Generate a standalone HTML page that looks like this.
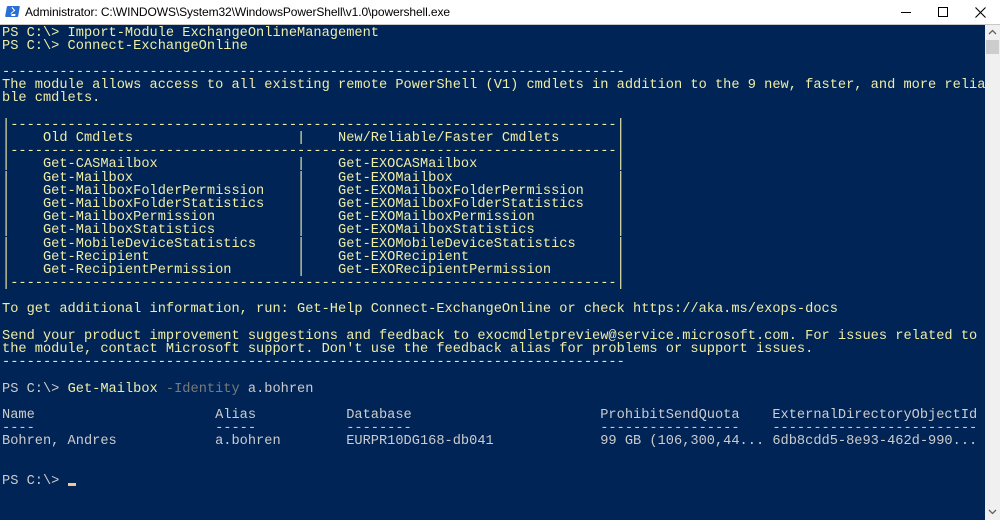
<!DOCTYPE html>
<html><head><meta charset="utf-8"><style>
*{margin:0;padding:0;box-sizing:border-box}
html,body{width:1000px;height:520px;overflow:hidden;background:#012456}
.tb{position:absolute;left:0;top:0;width:1000px;height:25px;background:#fff;border-bottom:1px solid #c8c8c8}
.ic{position:absolute;left:6px;top:6px;width:13px;height:11px;background:#2b6fd6;transform:skewX(-10deg);border-radius:1px}
.ic:before{content:"";position:absolute;left:3px;top:2px;width:4px;height:4px;border-right:1.5px solid #fff;border-bottom:1.5px solid #fff;transform:rotate(-45deg)}
.ic:after{content:"";position:absolute;left:6px;top:8px;width:4px;height:1.5px;background:#fff}
.tt{position:absolute;left:25px;top:5px;font:12px "Liberation Sans",sans-serif;color:#000;letter-spacing:-0.1px}
.con{position:absolute;left:0;top:25px;width:985px;height:495px;background:#012456}
pre{position:absolute;left:2px;top:1.5px;font:13.66px/13.18px "Liberation Mono",monospace;color:#cccccc;white-space:pre}
.y{color:#efeda6}
.g{color:#7a7a7a}
.sb{position:absolute;left:985px;top:25px;width:15px;height:495px;background:#f0f0f0}
.th{position:absolute;left:986px;top:40px;width:13px;height:14px;background:#cdcdcd}
.cur{display:inline-block;width:8px;height:3px;background:#f3c98b;vertical-align:-2px}
</style></head><body>
<div class="tb">
<div class="ic"></div>
<div class="tt">Administrator: C:\WINDOWS\System32\WindowsPowerShell\v1.0\powershell.exe</div>
<div style="position:absolute;left:901px;top:12px;width:10px;height:1px;background:#000"></div>
<div style="position:absolute;left:938px;top:7px;width:10px;height:10px;border:1px solid #000"></div>
<svg style="position:absolute;left:975px;top:7px" width="11" height="11"><path d="M0.5 0.5L10.5 10.5M10.5 0.5L0.5 10.5" stroke="#000" stroke-width="1.1"/></svg>
</div>
<div class="con"><pre><span class="y">PS C:\&gt; Import-Module ExchangeOnlineManagement
PS C:\&gt; Connect-ExchangeOnline

----------------------------------------------------------------------------
The module allows access to all existing remote PowerShell (V1) cmdlets in addition to the 9 new, faster, and more relia
ble cmdlets.

|--------------------------------------------------------------------------|
|    Old Cmdlets                    |    New/Reliable/Faster Cmdlets       |
|--------------------------------------------------------------------------|
|    Get-CASMailbox                 |    Get-EXOCASMailbox                 |
|    Get-Mailbox                    |    Get-EXOMailbox                    |
|    Get-MailboxFolderPermission    |    Get-EXOMailboxFolderPermission    |
|    Get-MailboxFolderStatistics    |    Get-EXOMailboxFolderStatistics    |
|    Get-MailboxPermission          |    Get-EXOMailboxPermission          |
|    Get-MailboxStatistics          |    Get-EXOMailboxStatistics          |
|    Get-MobileDeviceStatistics     |    Get-EXOMobileDeviceStatistics     |
|    Get-Recipient                  |    Get-EXORecipient                  |
|    Get-RecipientPermission        |    Get-EXORecipientPermission        |
|--------------------------------------------------------------------------|

To get additional information, run: Get-Help Connect-ExchangeOnline or check https://aka.ms/exops-docs

Send your product improvement suggestions and feedback to exocmdletpreview@service.microsoft.com. For issues related to
the module, contact Microsoft support. Don't use the feedback alias for problems or support issues.
----------------------------------------------------------------------------
</span>
PS C:\&gt; <span class="y">Get-Mailbox</span> <span class="g">-Identity</span> a.bohren

Name                      Alias           Database                       ProhibitSendQuota    ExternalDirectoryObjectId
----                      -----           --------                       -----------------    -------------------------
Bohren, Andres            a.bohren        EURPR10DG168-db041             99 GB (106,300,44... 6db8cdd5-8e93-462d-990...


PS C:\&gt; <span class="cur"></span></pre></div>
<div class="sb"></div>
<div class="th"></div>
<svg style="position:absolute;left:988px;top:29px" width="9" height="6"><path d="M1 5L4.5 1.5L8 5" stroke="#606060" fill="none" stroke-width="1.3"/></svg>
<svg style="position:absolute;left:988px;top:509px" width="9" height="6"><path d="M1 1L4.5 4.5L8 1" stroke="#606060" fill="none" stroke-width="1.3"/></svg>
</body></html>
